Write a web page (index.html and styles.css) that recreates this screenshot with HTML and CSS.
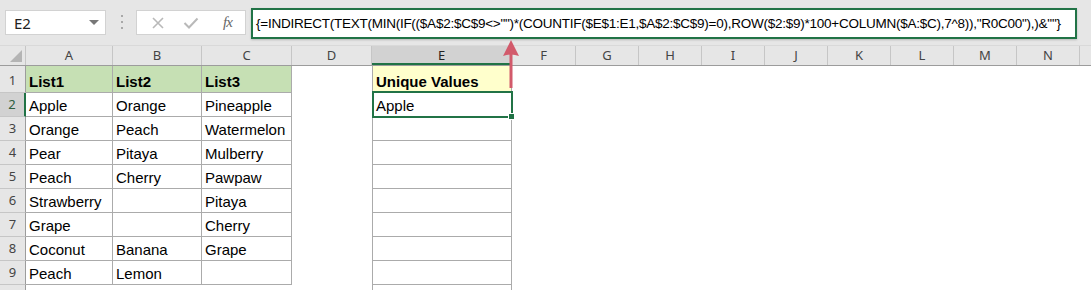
FILE: index.html
```html
<!DOCTYPE html>
<html lang="en">
<head>
  <meta charset="UTF-8" />
  <title>Unique values – Excel</title>
  <link rel="stylesheet" href="styles.css">
</head>
<body>
  <div class="toolbar">
    <div class="namebox">
      <span>E2</span>
      <span class="caret"></span>
    </div>
    <div class="grip"><i></i><i></i><i></i></div>
    <div class="fbtns">
      <svg class="ico" width="14" height="14" viewBox="0 0 14 14"><path d="M2 2 L12 12 M12 2 L2 12" stroke="#b9b9b9" stroke-width="1.6" fill="none"/></svg>
      <svg class="ico" width="16" height="14" viewBox="0 0 16 14"><path d="M1.5 7 L6 11.5 L14.5 2.5" stroke="#b9b9b9" stroke-width="2" fill="none"/></svg>
      <span class="fx">fx</span>
    </div>
    <div class="formula">{=INDIRECT(TEXT(MIN(IF(($A$2:$C$9&lt;&gt;"")*(COUNTIF($E$1:E1,$A$2:$C$9)=0),ROW($2:$9)*100+COLUMN($A:$C),7^8)),"R0C00"),)&amp;""}</div>
  </div>

  <div class="colheads">
    <div class="corner"><span class="tri"></span></div>
    <div class="ch w-a">A</div>
    <div class="ch w-b">B</div>
    <div class="ch w-c">C</div>
    <div class="ch w-d">D</div>
    <div class="ch w-e on">E</div>
    <div class="ch w-f">F</div>
    <div class="ch w-g">G</div>
    <div class="ch w-g">H</div>
    <div class="ch w-g">I</div>
    <div class="ch w-g">J</div>
    <div class="ch w-g">K</div>
    <div class="ch w-g">L</div>
    <div class="ch w-g">M</div>
    <div class="ch w-g">N</div>
    <div class="ch rest"></div>
  </div>

  <div class="sheet">
    <div class="rh r1">1</div><div class="c r1 head">List1</div><div class="c r1 head">List2</div><div class="c r1 head">List3</div><div class="blank"></div><div class="c e r1 uv">Unique Values</div>
    <div class="rh on">2</div><div class="c">Apple</div><div class="c">Orange</div><div class="c">Pineapple</div><div class="blank"></div><div class="c e sel">Apple</div>
    <div class="rh">3</div><div class="c">Orange</div><div class="c">Peach</div><div class="c">Watermelon</div><div class="blank"></div><div class="c e"></div>
    <div class="rh">4</div><div class="c">Pear</div><div class="c">Pitaya</div><div class="c">Mulberry</div><div class="blank"></div><div class="c e"></div>
    <div class="rh">5</div><div class="c">Peach</div><div class="c">Cherry</div><div class="c">Pawpaw</div><div class="blank"></div><div class="c e"></div>
    <div class="rh">6</div><div class="c">Strawberry</div><div class="c"></div><div class="c">Pitaya</div><div class="blank"></div><div class="c e"></div>
    <div class="rh">7</div><div class="c">Grape</div><div class="c"></div><div class="c">Cherry</div><div class="blank"></div><div class="c e"></div>
    <div class="rh">8</div><div class="c">Coconut</div><div class="c">Banana</div><div class="c">Grape</div><div class="blank"></div><div class="c e"></div>
    <div class="rh">9</div><div class="c">Peach</div><div class="c">Lemon</div><div class="c"></div><div class="blank"></div><div class="c e"></div>
    <div class="rh last"></div><div class="blank"></div><div class="blank"></div><div class="blank"></div><div class="blank"></div><div class="c e last"></div>
  </div>

  <!-- annotation arrow pointing at the formula -->
  <svg class="arrow" width="24" height="52" viewBox="0 0 24 52">
    <path d="M12 1 L20 17 Q12 14 4 17 Z" fill="#d25a6b"/>
    <rect x="10.5" y="14" width="3" height="35" fill="#d25a6b"/>
  </svg>
</body>
</html>
```

FILE: styles.css
```css
/* ——— sheet chrome ——— */
body { margin: 0; background: #fff; font-family: "Liberation Sans", Arial, sans-serif; width: 1091px; height: 290px; overflow: hidden; position: relative; }

.toolbar { height: 46px; background: #e6e6e6; display: flex; align-items: flex-start; box-sizing: border-box; border-bottom: 1px solid #d9d9d9; }
.namebox { margin: 10px 0 0 5px; width: 101px; height: 25px; box-sizing: border-box; background: #fff; border: 1px solid #d2d2d2; display: flex; align-items: center; justify-content: space-between; padding: 0 6px 0 8px; font: 15px "Noto Sans", sans-serif; color: #222; }
.caret { width: 0; height: 0; border-left: 5px solid transparent; border-right: 5px solid transparent; border-top: 5px solid #777; }
.grip { margin: 15px 0 0 15px; width: 3px; display: flex; flex-direction: column; gap: 4px; }
.grip i { display: block; width: 2px; height: 2px; background: #a8a8a8; }
.fbtns { margin: 10px 0 0 12px; width: 110px; height: 25px; box-sizing: border-box; background: #fff; border: 1px solid #d2d2d2; display: flex; align-items: center; padding: 0 10px 0 14px; gap: 18px; }
.fbtns .ico { flex: none; }
.fx { margin-left: 6px; font: italic 15px "Liberation Serif", serif; color: #666; letter-spacing: -1px; }
.formula { margin: 8px 0 0 5px; width: 826px; height: 31px; box-sizing: border-box; background: #fff; border: 2px solid #217346; box-shadow: 0 1px 2px rgba(0,0,0,0.2); padding: 0 0 0 3px; font: 13.5px "Liberation Sans", sans-serif; letter-spacing: -0.25px; line-height: 27px; color: #000; white-space: nowrap; overflow: hidden; }

.colheads { display: flex; height: 20px; background: #e6e6e6; border-bottom: 1px solid #9c9c9c; box-sizing: border-box; }
.corner { width: 26px; flex: none; position: relative; border-right: 1px solid #c6c6c6; box-sizing: border-box; }
.tri { position: absolute; right: 3px; bottom: 3px; width: 0; height: 0; border-left: 12px solid transparent; border-bottom: 12px solid #b4b4b4; }
.ch { flex: none; box-sizing: border-box; border-right: 1px solid #c6c6c6; text-align: center; font: 13px "Noto Sans", sans-serif; line-height: 19px; color: #444; }
.ch.on { background: #d2d2d2; border-bottom: 2px solid #217346; color: #222; }
.w-a { width: 87px; } .w-b { width: 89px; } .w-c { width: 90px; } .w-d { width: 80px; } .w-e { width: 140px; }
.w-f { width: 64px; } .w-g { width: 63px; }
.ch.rest { flex: 1; border-right: none; }

.sheet { display: grid; grid-template-columns: 26px 87px 89px 90px 80px 140px; grid-template-rows: 27px repeat(8, 24px) 5px; }
.rh { background: #e6e6e6; border-right: 1px solid #9c9c9c; border-bottom: 1px solid #c6c6c6; text-align: center; font: 13px "Noto Sans", sans-serif; line-height: 23px; color: #444; }
.rh.r1 { line-height: 28px; }
.rh.on { background: #d2d2d2; border-right: 2px solid #217346; color: #2f5f40; }
.c { border-right: 1px solid #ababab; border-bottom: 1px solid #ababab; font-size: 15px; line-height: 17px; padding: 0 0 2px 3px; display: flex; align-items: flex-end; color: #000; white-space: nowrap; }
.c.e { border-left: 1px solid #ababab; }
.last { border-bottom: none; }
.head { background: #c6e0b4; font-weight: bold; }
.uv { background: #ffffcc; font-weight: bold; }
.sel { position: relative; }
.sel::after { content: ""; position: absolute; left: -1px; top: -2px; right: -2px; bottom: -2px; border: 2px solid #217346; }
.sel::before { content: ""; position: absolute; right: -4px; bottom: -4px; width: 5px; height: 5px; background: #217346; border: 1px solid #fff; z-index: 1; }

.arrow { position: absolute; left: 499px; top: 39px; }
```
